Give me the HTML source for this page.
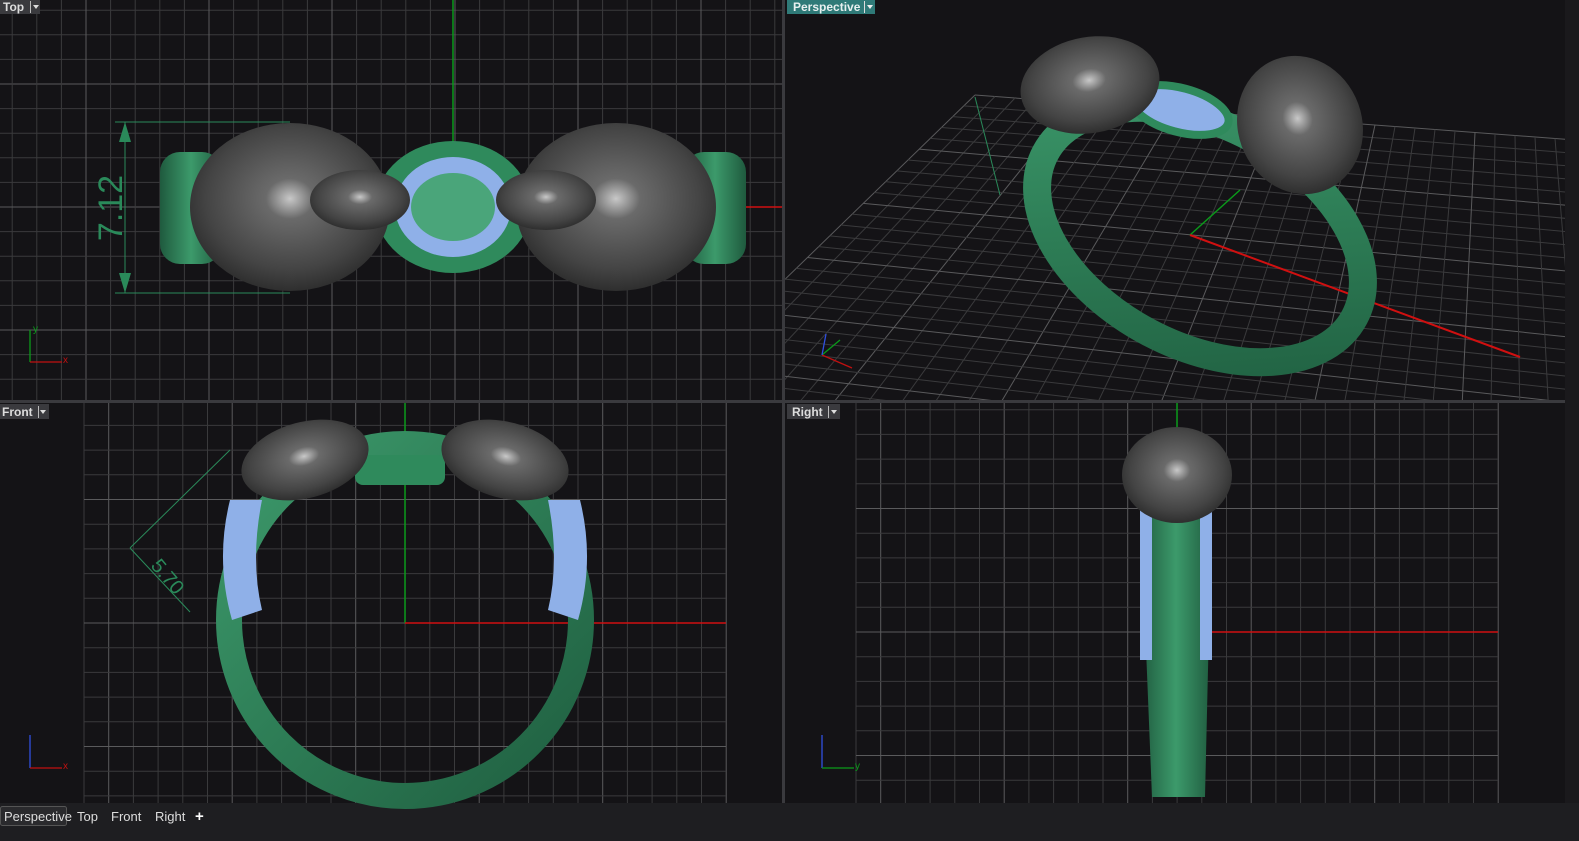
<!DOCTYPE html>
<html><head><meta charset="utf-8"><style>
html,body{margin:0;padding:0;background:#141316;width:1579px;height:841px;overflow:hidden;font-family:"Liberation Sans",sans-serif}
svg{position:absolute;left:0;top:0}
</style></head><body>
<svg id="s" width="1579" height="841" viewBox="0 0 1579 841" xmlns="http://www.w3.org/2000/svg">
<defs>
<radialGradient id="head" cx="0.5" cy="0.45" r="0.6"><stop offset="0" stop-color="#c8c8c8"/><stop offset="0.2" stop-color="#6a6a6a"/><stop offset="0.7" stop-color="#444"/><stop offset="1" stop-color="#262626"/></radialGradient>
<linearGradient id="grn" x1="0" y1="0" x2="1" y2="1"><stop offset="0" stop-color="#3d9a6c"/><stop offset="0.5" stop-color="#2d7c55"/><stop offset="1" stop-color="#1f5e40"/></linearGradient>
<linearGradient id="grnv" x1="0" y1="0" x2="1" y2="0"><stop offset="0" stop-color="#1f5a3e"/><stop offset="0.5" stop-color="#3c9a6b"/><stop offset="1" stop-color="#1f5a3e"/></linearGradient>
<clipPath id="pc"><rect x="785" y="0" width="780" height="400"/></clipPath>
</defs>
<rect width="1579" height="841" fill="#141316"/>
<g id="grids" stroke="#3a3a3c" stroke-width="1"></g>
<g id="pgrid" stroke="#3a3a3c" stroke-width="1" clip-path="url(#pc)"></g>
<!-- dividers -->
<rect x="0" y="400" width="1566" height="3" fill="#3a3a3e"/>
<rect x="782" y="0" width="3" height="803" fill="#3a3a3e"/>
<rect x="1565" y="0" width="14" height="803" fill="#1a191c"/>
<rect x="0" y="803" width="1579" height="38" fill="#1e1e21"/>

<!-- TOP VIEW -->
<line x1="453" y1="0" x2="453" y2="207" stroke="#0a9a1a" stroke-width="1.5"/>
<line x1="745" y1="207" x2="782" y2="207" stroke="#d01010" stroke-width="1.5"/>
<rect x="160" y="152" width="62" height="112" rx="20" fill="url(#grnv)"/>
<rect x="684" y="152" width="62" height="112" rx="20" fill="url(#grnv)"/>
<ellipse cx="453" cy="207" rx="78" ry="66" fill="#2f8a5c"/>
<ellipse cx="453" cy="207" rx="58" ry="50" fill="#8fb0e8"/>
<ellipse cx="453" cy="207" rx="42" ry="34" fill="#4aa57a"/>
<ellipse cx="290" cy="207" rx="100" ry="84" fill="url(#head)"/>
<ellipse cx="360" cy="200" rx="50" ry="30" fill="url(#head)"/>
<ellipse cx="616" cy="207" rx="100" ry="84" fill="url(#head)"/>
<ellipse cx="546" cy="200" rx="50" ry="30" fill="url(#head)"/>
<g stroke="#2a8a5a" stroke-width="1"><line x1="115" y1="122" x2="290" y2="122"/><line x1="115" y1="293" x2="290" y2="293"/><line x1="125" y1="122" x2="125" y2="293"/></g>
<polygon points="125,122 119,142 131,142" fill="#2a8a5a"/><polygon points="125,293 119,273 131,273" fill="#2a8a5a"/>
<text x="0" y="0" transform="translate(122,208) rotate(-90)" text-anchor="middle" fill="#2a8a5a" font-size="34">7.12</text>
<g stroke-width="1.3"><line x1="30" y1="362" x2="30" y2="330" stroke="#0a9a1a"/><line x1="30" y1="362" x2="62" y2="362" stroke="#c01010"/></g>
<text x="63" y="363" fill="#c01010" font-size="10">x</text><text x="33" y="332" fill="#0a9a1a" font-size="10">y</text>

<!-- PERSPECTIVE -->
<line x1="1190" y1="235" x2="1240" y2="190" stroke="#0a9a1a" stroke-width="1.5"/>
<line x1="1190" y1="235" x2="1520" y2="357" stroke="#d01010" stroke-width="2"/>
<ellipse cx="1200" cy="235" rx="175" ry="110" transform="rotate(28 1200 235)" fill="none" stroke="url(#grn)" stroke-width="28"/>
<ellipse cx="1180" cy="110" rx="50" ry="22" transform="rotate(15 1180 110)" fill="#8fb0e8" stroke="#2f8a5c" stroke-width="8"/>
<ellipse cx="1090" cy="85" rx="70" ry="48" transform="rotate(-10 1090 85)" fill="url(#head)"/>
<ellipse cx="1300" cy="125" rx="62" ry="70" transform="rotate(-20 1300 125)" fill="url(#head)"/>
<line x1="975" y1="97" x2="1000" y2="195" stroke="#2a8a5a"/>
<g stroke-width="1.3"><line x1="822" y1="355" x2="840" y2="340" stroke="#0a9a1a"/><line x1="822" y1="355" x2="852" y2="368" stroke="#c01010"/><line x1="822" y1="355" x2="826" y2="334" stroke="#3050e0"/></g>

<!-- FRONT -->
<line x1="405" y1="403" x2="405" y2="623" stroke="#0a9a1a" stroke-width="1.5"/>
<line x1="405" y1="623" x2="726" y2="623" stroke="#d01010" stroke-width="1.5"/>
<circle cx="405" cy="620" r="176" fill="none" stroke="url(#grn)" stroke-width="26"/>
<path d="M230 500 Q215 560 232 620 L262 610 Q250 560 262 500Z" fill="#8fb0e8"/>
<path d="M580 500 Q595 560 578 620 L548 610 Q560 560 548 500Z" fill="#8fb0e8"/>
<rect x="355" y="455" width="90" height="30" rx="8" fill="#2f8a5c"/>
<ellipse cx="305" cy="460" rx="65" ry="38" transform="rotate(-15 305 460)" fill="url(#head)"/>
<ellipse cx="505" cy="460" rx="65" ry="38" transform="rotate(15 505 460)" fill="url(#head)"/>
<line x1="130" y1="548" x2="230" y2="450" stroke="#2a8a5a"/><line x1="130" y1="548" x2="190" y2="612" stroke="#2a8a5a"/>
<text transform="translate(150,566) rotate(50)" fill="#2a8a5a" font-size="20">5.70</text>
<g stroke-width="1.3"><line x1="30" y1="768" x2="30" y2="735" stroke="#3050e0"/><line x1="30" y1="768" x2="62" y2="768" stroke="#c01010"/></g>
<text x="63" y="769" fill="#c01010" font-size="10">x</text>

<!-- RIGHT -->
<line x1="1177" y1="403" x2="1177" y2="632" stroke="#0a9a1a" stroke-width="1.5"/>
<line x1="1177" y1="632" x2="1498" y2="632" stroke="#d01010" stroke-width="1.5"/>
<path d="M1140 500 L1212 500 L1205 797 L1152 797Z" fill="url(#grnv)"/>
<rect x="1140" y="500" width="12" height="160" fill="#8fb0e8"/><rect x="1200" y="500" width="12" height="160" fill="#8fb0e8"/>
<ellipse cx="1177" cy="475" rx="55" ry="48" fill="url(#head)"/>
<g stroke-width="1.3"><line x1="822" y1="768" x2="822" y2="735" stroke="#3050e0"/><line x1="822" y1="768" x2="854" y2="768" stroke="#0a9a1a"/></g>
<text x="855" y="769" fill="#0a9a1a" font-size="10">y</text>

<!-- tabs -->
<rect x="0" y="0" width="40" height="14" fill="#3a3a3e"/><text x="3" y="11" fill="#ddd" font-size="12" font-weight="bold">Top</text>
<rect x="30" y="1" width="1" height="12" fill="#bbb"/><polygon points="33,5 39,5 36,9" fill="#ddd"/>
<rect x="787" y="0" width="88" height="14" fill="#2f7a78"/><text x="793" y="11" fill="#e8f0f0" font-size="12" font-weight="bold">Perspective</text>
<rect x="864" y="1" width="1" height="12" fill="#ddd"/><polygon points="867,5 873,5 870,9" fill="#eee"/>
<rect x="0" y="404" width="49" height="15" fill="#3a3a3e"/><text x="2" y="416" fill="#ddd" font-size="12" font-weight="bold">Front</text>
<rect x="38" y="406" width="1" height="12" fill="#bbb"/><polygon points="40,410 46,410 43,414" fill="#ddd"/>
<rect x="787" y="404" width="53" height="15" fill="#3a3a3e"/><text x="792" y="416" fill="#ddd" font-size="12" font-weight="bold">Right</text>
<rect x="828" y="406" width="1" height="12" fill="#bbb"/><polygon points="831,410 837,410 834,414" fill="#ddd"/>
<rect x="0.5" y="806.5" width="66" height="19" rx="2" fill="#2a2a2d" stroke="#555"/>
<g fill="#ddd" font-size="13"><text x="4" y="821">Perspective</text><text x="77" y="821">Top</text><text x="111" y="821">Front</text><text x="155" y="821">Right</text></g>
<text x="195" y="821" fill="#fff" font-size="15" font-weight="bold">+</text>
</svg>
<script>
var NS='http://www.w3.org/2000/svg';
function L(g,x1,y1,x2,y2,c){var l=document.createElementNS(NS,'line');l.setAttribute('x1',x1);l.setAttribute('y1',y1);l.setAttribute('x2',x2);l.setAttribute('y2',y2);if(c)l.setAttribute('stroke',c);g.appendChild(l);}
var g=document.getElementById('grids'),pg=document.getElementById('pgrid');
var s=24.6;
for(var i=-20;i<40;i++){var x=86+i*s;if(x>=0&&x<=782)L(g,x,0,x,400,i%5==0?'#5a5a5c':null);var y=207+i*s;if(y>=0&&y<=400&&i<20)L(g,0,y,782,y,i%5==0?'#5a5a5c':null);}
for(var i=0;i<=26;i++){var x=84+i*24.7;L(g,x,403,x,803,i%5==1?'#5a5a5c':null);}
for(var i=-10;i<10;i++){var y=623+i*24.7;if(y>=403&&y<=803)L(g,84,y,726,y,i%5==0?'#5a5a5c':null);}
for(var i=0;i<=26;i++){var x=856+i*24.7;L(g,x,403,x,803,i%5==1?'#5a5a5c':null);}
for(var i=-10;i<10;i++){var y=632+i*24.7;if(y>=403&&y<=803)L(g,856,y,1498,y,i%5==0?'#5a5a5c':null);}
var A=[975,95],B=[1575,140],C=[1620,540],D=[640,420],N=30;
function P(u,v){var tx=A[0]+(B[0]-A[0])*u,ty=A[1]+(B[1]-A[1])*u,bx=D[0]+(C[0]-D[0])*u,by=D[1]+(C[1]-D[1])*u;return[tx+(bx-tx)*v,ty+(by-ty)*v];}
for(var i=0;i<=N;i++){var t=i/N,p=P(t,0),q=P(t,1);L(pg,p[0],p[1],q[0],q[1],i%5==0?'#5a5a5c':null);p=P(0,t);q=P(1,t);L(pg,p[0],p[1],q[0],q[1],i%5==0?'#5a5a5c':null);}
</script>
</body></html>
